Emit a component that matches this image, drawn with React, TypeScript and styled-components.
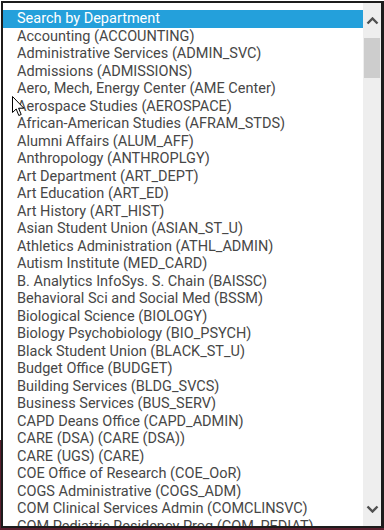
import styled, { createGlobalStyle } from 'styled-components';

const GlobalStyle = createGlobalStyle`
  html, body {
    margin: 0;
    padding: 0;
  }
  body {
    background: linear-gradient(#ffffff 0, #ffffff 440px, #5a1f2e 440px);
    min-height: 530px;
    font-family: Roboto, "Liberation Sans", sans-serif;
  }
`;

const Page = styled.div`
  position: relative;
  width: 384px;
  height: 530px;
  padding: 1px 0 0 1px;
  box-sizing: border-box;
`;

const ListBox = styled.div`
  display: flex;
  width: 383px;
  height: 527px;
  box-sizing: border-box;
  border-style: solid;
  border-color: #1c1c1c;
  border-width: 2px 3px 2px 2px;
  background: #ffffff;
  overflow: hidden;
`;

const Options = styled.ul`
  flex: 1;
  list-style: none;
  margin: 0;
  padding: 7px 0 0;
  overflow: hidden;
`;

const Option = styled.li<{ $selected?: boolean }>`
  height: 17.5px;
  line-height: 17.5px;
  padding-left: 14px;
  font-size: 14.5px;
  white-space: nowrap;
  color: ${(p) => (p.$selected ? '#ffffff' : '#474747')};
  background: ${(p) => (p.$selected ? '#24a0db' : 'transparent')};
`;

const Scrollbar = styled.div`
  width: 18px;
  display: flex;
  flex-direction: column;
  background: #eeeeee;
`;

const ArrowButton = styled.div`
  height: 35px;
  display: flex;
  align-items: center;
  justify-content: center;
`;

const Track = styled.div`
  flex: 1;
  display: flex;
  flex-direction: column;
`;

const Thumb = styled.div`
  height: 40px;
  margin: 0 1px 0 1px;
  background: #cdcdcd;
`;

const Cursor = styled.svg`
  position: absolute;
  left: 12px;
  top: 96px;
`;

const departments = [
  'Accounting (ACCOUNTING)',
  'Administrative Services (ADMIN_SVC)',
  'Admissions (ADMISSIONS)',
  'Aero, Mech, Energy Center (AME Center)',
  'Aerospace Studies (AEROSPACE)',
  'African-American Studies (AFRAM_STDS)',
  'Alumni Affairs (ALUM_AFF)',
  'Anthropology (ANTHROPLGY)',
  'Art Department (ART_DEPT)',
  'Art Education (ART_ED)',
  'Art History (ART_HIST)',
  'Asian Student Union (ASIAN_ST_U)',
  'Athletics Administration (ATHL_ADMIN)',
  'Autism Institute (MED_CARD)',
  'B. Analytics InfoSys. S. Chain (BAISSC)',
  'Behavioral Sci and Social Med (BSSM)',
  'Biological Science (BIOLOGY)',
  'Biology Psychobiology (BIO_PSYCH)',
  'Black Student Union (BLACK_ST_U)',
  'Budget Office (BUDGET)',
  'Building Services (BLDG_SVCS)',
  'Business Services (BUS_SERV)',
  'CAPD Deans Office (CAPD_ADMIN)',
  'CARE (DSA) (CARE (DSA))',
  'CARE (UGS) (CARE)',
  'COE Office of Research (COE_OoR)',
  'COGS Administrative (COGS_ADM)',
  'COM Clinical Services Admin (COMCLINSVC)',
  'COM Pediatric Residency Prog (COM_PEDIAT)',
];

function Chevron({ up }: { up?: boolean }) {
  return (
    <svg width="13" height="8" viewBox="0 0 13 8">
      <path
        d={up ? 'M1.5 6.5 L6.5 1.5 L11.5 6.5' : 'M1.5 1.5 L6.5 6.5 L11.5 1.5'}
        fill="none"
        stroke="#505050"
        strokeWidth="2.4"
      />
    </svg>
  );
}

export default function App() {
  return (
    <>
      <GlobalStyle />
      <Page>
        <ListBox>
          <Options>
            <Option $selected>Search by Department</Option>
            {departments.map((d) => (
              <Option key={d}>{d}</Option>
            ))}
          </Options>
          <Scrollbar>
            <ArrowButton>
              <Chevron up />
            </ArrowButton>
            <Track>
              <Thumb />
            </Track>
            <ArrowButton>
              <Chevron />
            </ArrowButton>
          </Scrollbar>
        </ListBox>
        <Cursor width="13" height="21" viewBox="0 0 13 21">
          <path
            d="M0.5 0.5 L0.5 16.5 L4.2 13 L6.8 19.5 L9.2 18.5 L6.6 12.2 L11.8 12.2 Z"
            fill="#ffffff"
            stroke="#000000"
            strokeWidth="1"
          />
        </Cursor>
      </Page>
    </>
  );
}
